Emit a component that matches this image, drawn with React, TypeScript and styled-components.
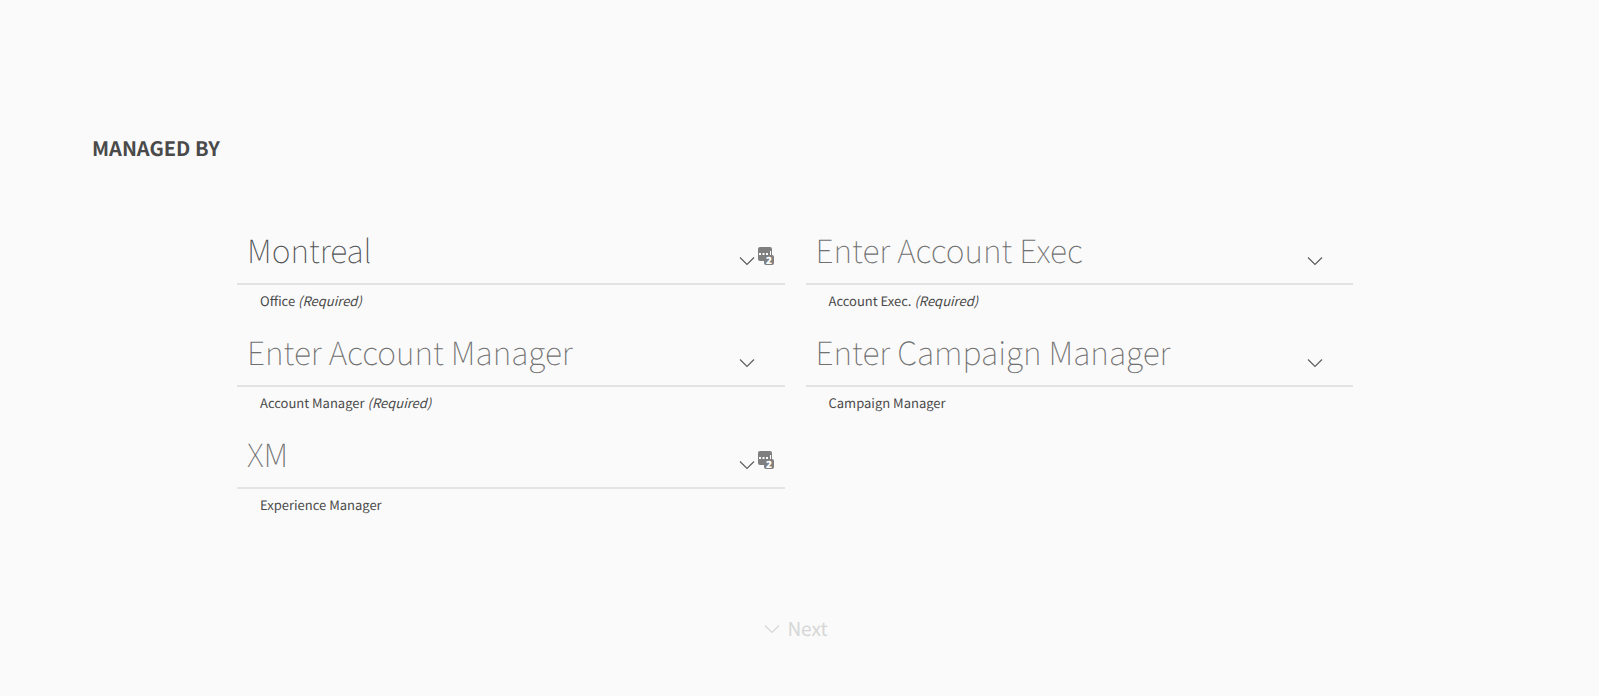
import React, { useId, useState } from "react";
import styled, { createGlobalStyle } from "styled-components";

const GlobalStyle = createGlobalStyle`
  *, *::before, *::after { box-sizing: border-box; }
  body {
    margin: 0;
    background: #fafafa;
    color: #4a4a4a;
    font-family: "Source Sans Pro", "Noto Sans CJK SC", "Open Sans", sans-serif;
    text-rendering: geometricPrecision;
  }
  button, input { font-family: inherit; text-rendering: inherit; }
`;

const Page = styled.main`
  display: flex;
  flex-direction: column;
  padding: 132px 0 48px;
`;

const Heading = styled.h1`
  margin: 0 0 54px 92px;
  font-size: 20px;
  line-height: 32px;
  font-weight: 700;
  text-transform: uppercase;
`;

const FieldGrid = styled.form`
  display: grid;
  grid-template-columns: 1fr 1fr;
  column-gap: 21px;
  margin: 0 246px 0 237px;
`;

const Field = styled.div`
  display: flex;
  flex-direction: column;
  height: 102px;
`;

const Control = styled.div`
  display: flex;
  align-items: flex-end;
  height: 67px;
  padding: 0 10px;
  border-bottom: 2px solid #e3e3e3;
`;

const TextInput = styled.input`
  flex: 1;
  min-width: 0;
  height: 64px;
  padding: 0 0 2px;
  border: 0;
  outline: 0;
  background: transparent;
  color: #505356;
  font-size: 32px;
  line-height: 48px;
  font-weight: 100;

  &::placeholder {
    color: #707070;
    opacity: 1;
  }
`;

const IconButton = styled.button`
  display: flex;
  align-items: center;
  justify-content: center;
  width: 16px;
  height: 16px;
  margin-bottom: 14px;
  padding: 0;
  border: 0;
  background: none;
  color: #5a5a5a;
  cursor: pointer;
`;

const BadgeSlot = styled.span`
  display: flex;
  width: 20px;
  height: 20px;
  margin-bottom: 16px;
  justify-content: flex-end;
`;

const Caption = styled.label`
  padding: 5px 0 0 23px;
  font-size: 13px;
  line-height: 22px;
`;

const NextButton = styled.button`
  display: flex;
  align-items: center;
  align-self: center;
  gap: 7px;
  margin: 91px 7px 0 0;
  padding: 0;
  border: 0;
  background: none;
  color: #d6d6d6;
  font-size: 19px;
  line-height: 28px;
`;

function Chevron() {
  return (
    <svg width="16" height="10" viewBox="0 0 16 10" fill="none" aria-hidden="true">
      <path d="M1 1.500 8 8.500 15 1.500" stroke="currentColor" strokeWidth="1.100" />
    </svg>
  );
}

function EntriesBadge() {
  return (
    <svg width="17" height="19" viewBox="0 0 17 19" aria-hidden="true">
      <rect width="14" height="14" rx="2" fill="#7f7f7f" />
      <rect x="6" y="8" width="10" height="10" rx="2" fill="#7f7f7f" />
      <path fill="#fafafa" d="M1 6h2v2H1zM4.500 6h2v2h-2zM8 6h2v2H8zM12 4h1v4h-1z" />
      <text
        x="11"
        y="17"
        fill="#fff"
        fontFamily="Open Sans, sans-serif"
        fontSize="10"
        fontWeight="800"
        textAnchor="middle"
      >
        2
      </text>
    </svg>
  );
}

type FieldProps = {
  caption: string;
  placeholder: string;
  initial?: string;
  required?: boolean;
  badge?: boolean;
};

function ComboField({ caption, placeholder, initial = "", required, badge }: FieldProps) {
  const id = useId();
  const [value, setValue] = useState(initial);
  return (
    <Field>
      <Control>
        <TextInput
          id={id}
          autoComplete="off"
          placeholder={placeholder}
          required={required}
          value={value}
          onChange={(e) => setValue(e.target.value)}
        />
        <IconButton type="button" aria-label={`Show ${caption} options`}>
          <Chevron />
        </IconButton>
        <BadgeSlot>{badge && <EntriesBadge />}</BadgeSlot>
      </Control>
      <Caption htmlFor={id}>
        {caption} {required && <em>(Required)</em>}
      </Caption>
    </Field>
  );
}

const fields: FieldProps[] = [
  { caption: "Office", placeholder: "Enter Office", initial: "Montreal", required: true, badge: true },
  { caption: "Account Exec.", placeholder: "Enter Account Exec", required: true },
  { caption: "Account Manager", placeholder: "Enter Account Manager", required: true },
  { caption: "Campaign Manager", placeholder: "Enter Campaign Manager" },
  { caption: "Experience Manager", placeholder: "XM", badge: true },
];

export default function App() {
  return (
    <>
      <GlobalStyle />
      <Page>
        <Heading>Managed by</Heading>
        <FieldGrid>
          {fields.map((field) => (
            <ComboField key={field.caption} {...field} />
          ))}
        </FieldGrid>
        <NextButton type="button">
          <Chevron />
          Next
        </NextButton>
      </Page>
    </>
  );
}
